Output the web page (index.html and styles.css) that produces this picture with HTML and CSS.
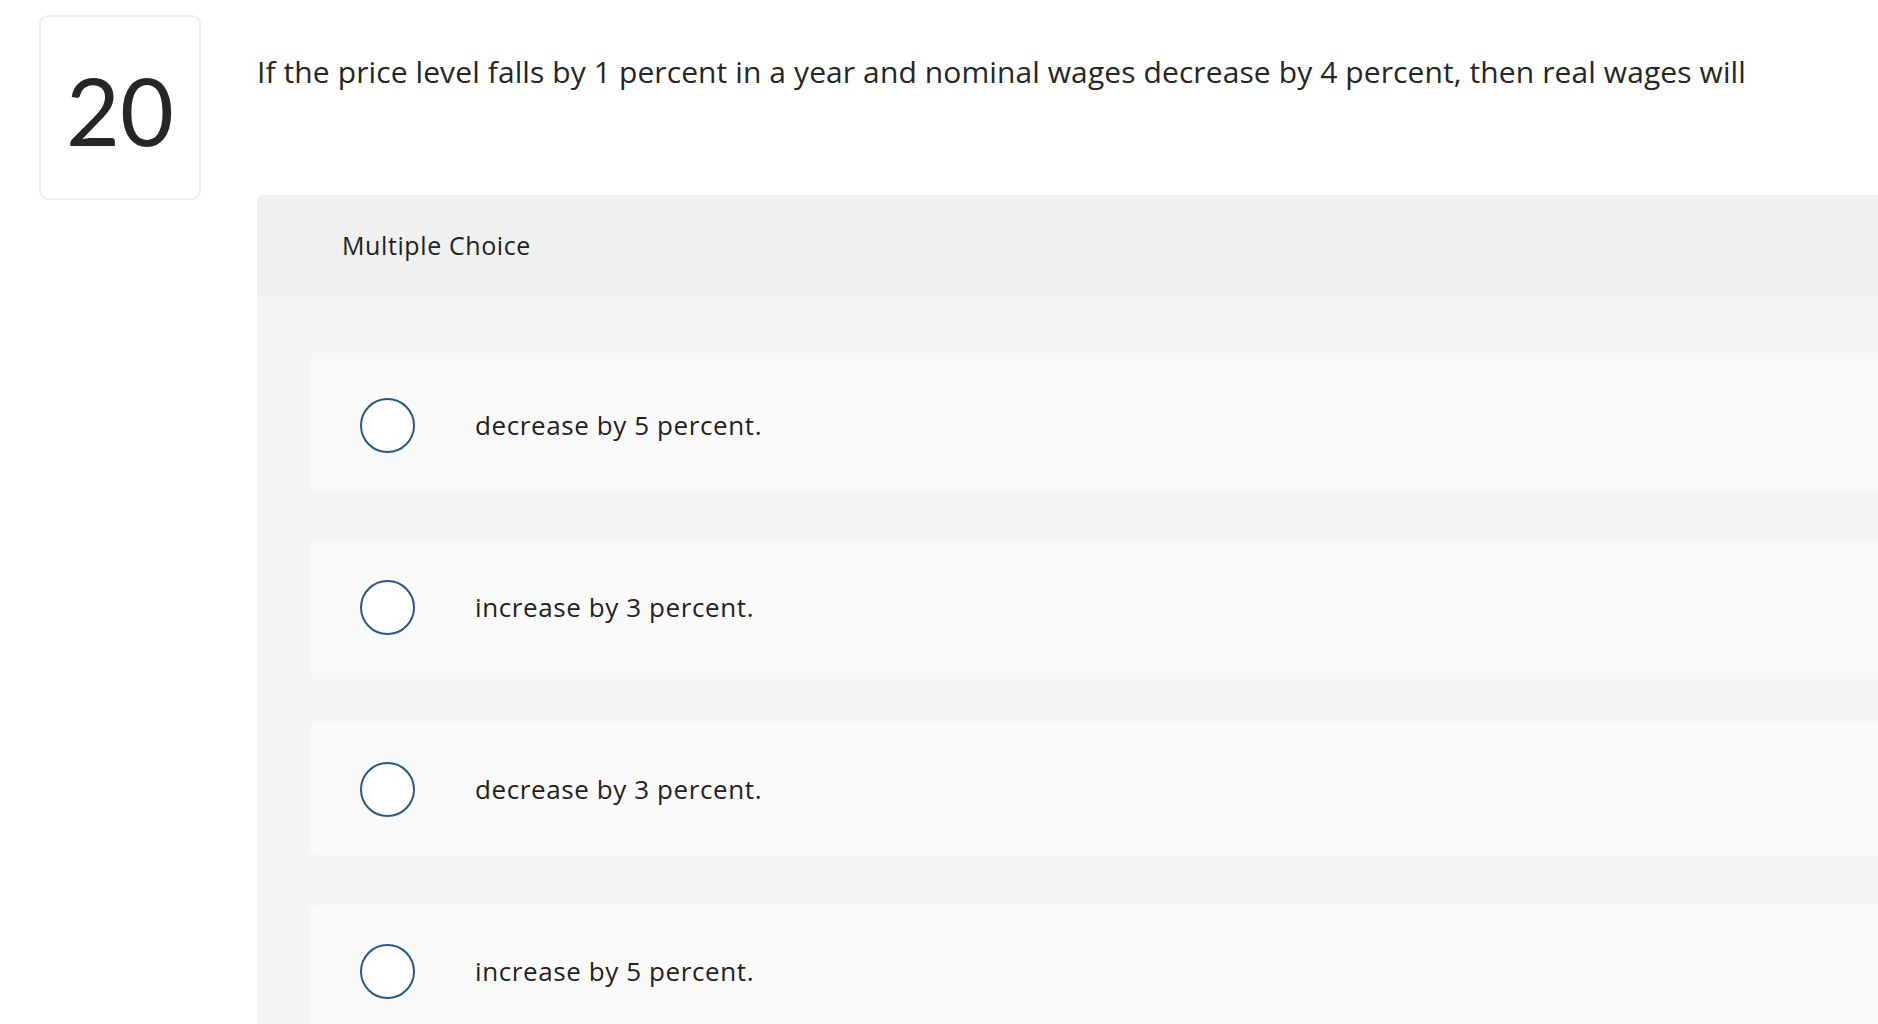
FILE: index.html
```html
<!DOCTYPE html>
<html lang="en">
<head>
  <meta charset="UTF-8" />
  <meta name="viewport" content="width=device-width, initial-scale=1.0" />
  <title>Question 20</title>
  <link rel="stylesheet" href="styles.css">
</head>
<body>
  <div class="question">
    <div class="num-box">20</div>
    <div class="content">
      <p class="prompt">If the price level falls by 1 percent in a year and nominal wages decrease by 4 percent, then real wages will</p>
      <div class="panel">
        <div class="panel-head">Multiple Choice</div>
        <div class="choices">
          <label class="choice"><span class="radio"></span><span class="choice-text">decrease by 5 percent.</span></label>
          <label class="choice"><span class="radio"></span><span class="choice-text">increase by 3 percent.</span></label>
          <label class="choice"><span class="radio"></span><span class="choice-text">decrease by 3 percent.</span></label>
          <label class="choice"><span class="radio"></span><span class="choice-text">increase by 5 percent.</span></label>
        </div>
      </div>
    </div>
  </div>
</body>
</html>
```

FILE: styles.css
```css
* {
  box-sizing: border-box;
  font-family: 'Open Sans', Lato, sans-serif;
}

body {
  margin: 0;
  background: #fff;
  color: #222;
  overflow: hidden;
}

.question {
  display: flex;
  align-items: flex-start;
}

.num-box {
  flex: none;
  width: 162px;
  height: 185px;
  margin: 15px 0 0 39px;
  border: 2px solid #eeeeee;
  border-radius: 9px;
  font-family: Lato, sans-serif;
  font-size: 93px;
  line-height: 1;
  color: #262626;
  display: flex;
  justify-content: center;
  padding-top: 47px;
}

.content {
  flex: 1;
  margin-left: 56px;
  padding-top: 52px;
}

.prompt {
  margin: 0;
  font-size: 30px;
  line-height: 40px;
  letter-spacing: 0.1px;
  color: #262626;
}

.panel {
  margin-top: 103px;
  background: #f5f5f5;
  border-top-left-radius: 6px;
  min-height: 900px;
}

.panel-head {
  background: #f0f0f0;
  height: 101px;
  padding: 34px 0 0 85px;
  font-size: 25px;
  line-height: 32px;
  letter-spacing: 0.6px;
  border-top-left-radius: 6px;
}

.choices {
  display: flex;
  flex-direction: column;
  gap: 50px;
  padding: 63px 0 0 53px;
}

.choice {
  display: flex;
  align-items: center;
  height: 132px;
  background: #fafafa;
  border-top-left-radius: 6px;
  border-bottom-left-radius: 6px;
  padding-left: 50px;
  cursor: pointer;
}

.radio {
  flex: none;
  width: 55px;
  height: 55px;
  border: 2px solid #2b5689;
  border-radius: 50%;
  background: #fff;
}

.choice-text {
  margin-left: 60px;
  font-size: 26px;
  letter-spacing: 0.6px;
  color: #222;
}
```
